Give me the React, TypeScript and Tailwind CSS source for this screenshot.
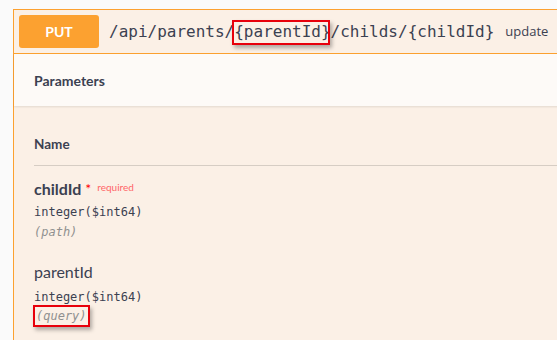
import React from "react";

const mono = "font-['DejaVu_Sans_Mono','Liberation_Mono',monospace]";
const sans = "font-['Lato','Open_Sans',sans-serif]";

function Marked({ children, className, box }: { children: React.ReactNode; className?: string; box: string }) {
    return (
        <span className={`relative inline-block ${className ?? ""}`}>
            {children}
            <span className={`pointer-events-none absolute border-2 border-[#e8000b] shadow-[2px_3px_4px_rgba(0,0,0,0.3)] ${box}`} />
        </span>
    );
}

export default function App() {
    return (
        <div className="flex h-[340px] w-[557px] overflow-hidden bg-[#fafafa] pl-[13px] pt-[9px] text-[#3b4151]">
            <div className="flex w-[560px] shrink-0 flex-col border-l border-t border-[#fca130] bg-[#fbf0e6]">
                <div className="flex h-[44px] shrink-0 items-center border-b border-[#fca130] pl-[5px]">
                    <div className={`flex h-[33px] w-[80px] items-center justify-center rounded-[3px] bg-[#fca130] text-[14px] font-bold text-white ${sans}`}>
                        PUT
                    </div>
                    <div className={`ml-[10px] whitespace-nowrap text-[16px] leading-[20px] ${mono}`}>
                        /api/parents/
                        <Marked box="-left-[2px] right-[1px] -top-[2px] -bottom-[3px]">{"{parentId}"}</Marked>
                        /childs/{"{childId}"}
                    </div>
                    <div className="ml-[11px] whitespace-nowrap font-['Open_Sans',sans-serif] text-[13px]">update</div>
                </div>

                <div className="flex h-[52px] shrink-0 items-center bg-[#fdfaf7] pl-[20px] shadow-[0_1px_2px_rgba(0,0,0,0.1)]">
                    <span className={`text-[14px] font-bold ${sans}`}>Parameters</span>
                </div>

                <div className="flex flex-col pl-[20px] pt-[30px]">
                    <div className={`border-b border-[#d6cdc4] pb-[12px] text-[13.5px] font-bold leading-[17px] ${sans}`}>
                        Name
                    </div>

                    <div className="mt-[13px] flex items-start gap-[4px] leading-[20px]">
                        <span className={`text-[16px] font-bold ${sans}`}>childId</span>
                        <span className={`text-[14px] text-[#ff0000] ${sans}`}>*</span>
                        <span className={`-mt-[2px] ml-[2px] text-[10px] text-[#ff6666] ${sans}`}>required</span>
                    </div>
                    <div className={`mt-[5px] text-[12px] leading-[16px] ${mono}`}>integer($int64)</div>
                    <div className={`mt-[4px] text-[12px] italic leading-[16px] text-[#909090] ${mono}`}>(path)</div>

                    <div className={`mt-[22px] text-[16px] leading-[20px] ${sans}`}>parentId</div>
                    <div className={`mt-[7px] text-[12px] leading-[16px] ${mono}`}>integer($int64)</div>
                    <div className={`mt-[3px] text-[12px] italic leading-[16px] text-[#909090] ${mono}`}>
                        <Marked className="ml-[2px]" box="-left-[3px] -right-[3px] -top-[3px] -bottom-[3px]">
                            (query)
                        </Marked>
                    </div>
                </div>
            </div>
        </div>
    );
}
